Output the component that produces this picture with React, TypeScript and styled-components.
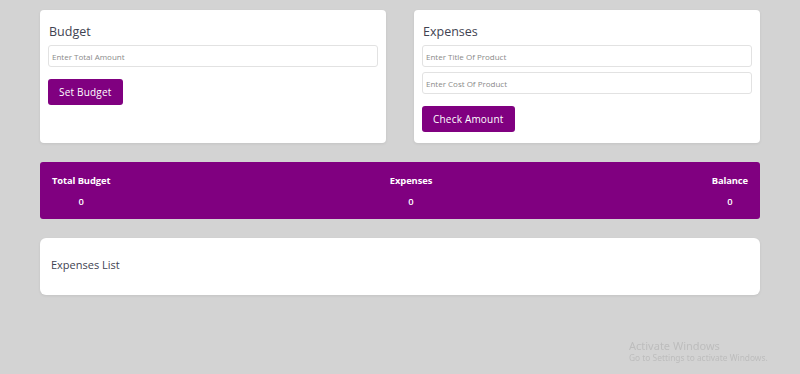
import { createGlobalStyle, styled } from "styled-components";

const GlobalStyle = createGlobalStyle`
  html, body {
    margin: 0;
    padding: 0;
    background: #d3d3d3;
    font-family: "Open Sans", "Noto Sans", sans-serif;
  }
  * { box-sizing: border-box; }
`;

const Page = styled.div`
  width: 720px;
  margin: 0 auto;
  padding-top: 10px;
  min-height: 374px;
`;

const TopRow = styled.div`
  display: grid;
  grid-template-columns: 1fr 1fr;
  gap: 28px;
`;

const Card = styled.div`
  background: #fff;
  border-radius: 4px;
  padding: 12px 8px 11px;
  box-shadow: 0 1px 3px rgba(0, 0, 0, 0.08);
  display: flex;
  flex-direction: column;
`;

const CardTitle = styled.h3`
  margin: 0 0 3px 1px;
  font-size: 12.5px;
  line-height: 20px;
  font-weight: 500;
  color: #3f4352;
`;

const Fields = styled.div`
  display: flex;
  flex-direction: column;
  gap: 5px;
`;

const Input = styled.input`
  height: 22px;
  width: 100%;
  border: 1px solid #e2e2e2;
  border-radius: 3px;
  padding: 0 3px;
  font-family: inherit;
  font-size: 8px;
  outline: none;
  &::placeholder { color: #8a8a8a; }
`;

const Button = styled.button`
  align-self: flex-start;
  margin-top: 12px;
  height: 26px;
  padding: 0 11px;
  border: none;
  border-radius: 3px;
  background: #800080;
  color: #fff;
  font-family: inherit;
  font-size: 10px;
  font-weight: 500;
  letter-spacing: 0.2px;
  cursor: pointer;
`;

const Summary = styled.div`
  margin-top: 19px;
  height: 57px;
  background: #800080;
  border-radius: 3px;
  padding: 12px 12px 0;
  display: flex;
  justify-content: space-between;
  color: #fff;
`;

const Stat = styled.div`
  display: flex;
  flex-direction: column;
  align-items: center;
  gap: 7px;
`;

const StatLabel = styled.span`
  font-size: 9.4px;
  font-weight: 700;
  line-height: 14px;
  letter-spacing: -0.1px;
`;

const StatValue = styled.span`
  font-size: 9.4px;
  font-weight: 600;
  line-height: 14px;
`;

const ListCard = styled.div`
  margin-top: 19px;
  height: 57px;
  background: #fff;
  border-radius: 6px;
  padding: 0 11px 5px;
  display: flex;
  align-items: center;
  box-shadow: 0 1px 3px rgba(0, 0, 0, 0.08);
`;

const ListTitle = styled.h4`
  margin: 0;
  font-size: 11px;
  font-weight: 500;
  color: #3f4352;
`;

const Watermark = styled.div`
  position: fixed;
  left: 629px;
  top: 339px;
  color: #bdbdbd;
  font-family: "Noto Sans", sans-serif;
  display: flex;
  flex-direction: column;
  gap: 1px;
`;

const WatermarkTitle = styled.div`
  font-size: 11px;
  line-height: 13px;
`;

const WatermarkText = styled.div`
  font-size: 8.4px;
  line-height: 10px;
`;

const stats = [
  { label: "Total Budget", value: 0 },
  { label: "Expenses", value: 0 },
  { label: "Balance", value: 0 },
];

export default function App() {
  return (
    <>
      <GlobalStyle />
      <Page>
        <TopRow>
          <Card>
            <CardTitle>Budget</CardTitle>
            <Fields>
              <Input placeholder="Enter Total Amount" />
            </Fields>
            <Button>Set Budget</Button>
          </Card>
          <Card>
            <CardTitle>Expenses</CardTitle>
            <Fields>
              <Input placeholder="Enter Title Of Product" />
              <Input placeholder="Enter Cost Of Product" />
            </Fields>
            <Button>Check Amount</Button>
          </Card>
        </TopRow>
        <Summary>
          {stats.map((s) => (
            <Stat key={s.label}>
              <StatLabel>{s.label}</StatLabel>
              <StatValue>{s.value}</StatValue>
            </Stat>
          ))}
        </Summary>
        <ListCard>
          <ListTitle>Expenses List</ListTitle>
        </ListCard>
      </Page>
      <Watermark>
        <WatermarkTitle>Activate Windows</WatermarkTitle>
        <WatermarkText>Go to Settings to activate Windows.</WatermarkText>
      </Watermark>
    </>
  );
}
